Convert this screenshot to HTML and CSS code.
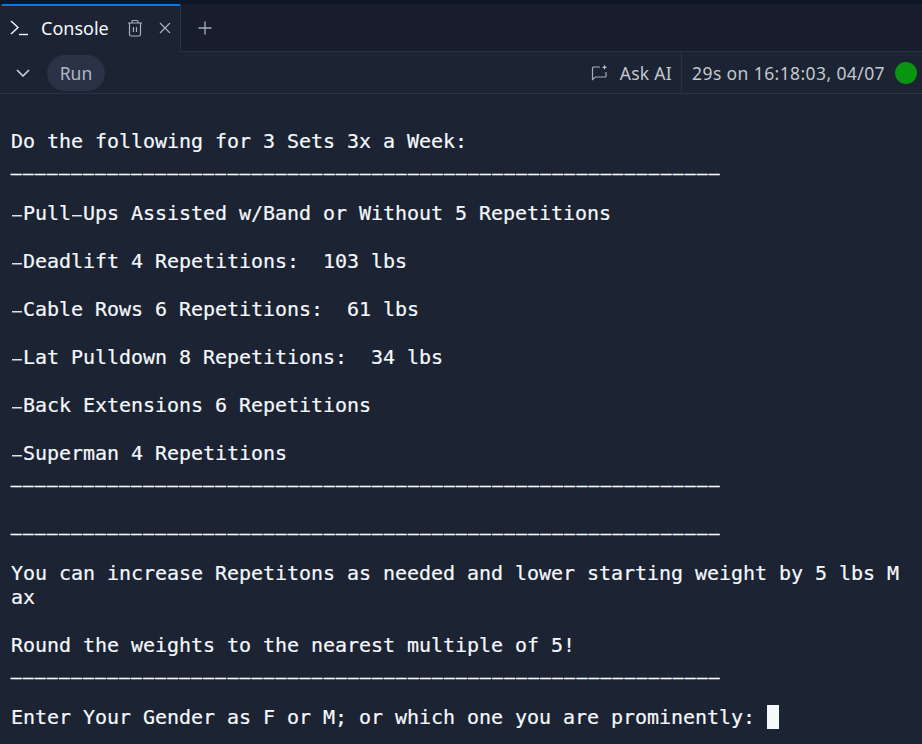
FILE: index.html
```html
<!DOCTYPE html>
<html lang="en">
<head>
<meta charset="utf-8">
<title>Console</title>
<link rel="stylesheet" href="styles.css">
</head>
<body>
<div class="app">
  <div class="tabbar">
    <div class="tab">
      <svg class="icon-term" width="22" height="18" viewBox="0 0 22 18" fill="none" stroke="#f5f9fc" stroke-width="1.4"><path d="M1 2l7 6.500L1 15"/><path d="M9 15.500h9"/></svg>
      <span class="tab-label">Console</span>
      <svg class="icon-trash" width="16" height="18" viewBox="0 0 16 18" fill="none" stroke="#a5afbd" stroke-width="1.2"><path d="M1 4h14M5 4V2.500a1 1 0 0 1 1-1h4a1 1 0 0 1 1 1V4M2.500 4v11.500a1.500 1.500 0 0 0 1.500 1.500h8a1.500 1.500 0 0 0 1.500-1.500V4M6.500 8v5M9.500 8v5"/></svg>
      <svg class="icon-close" width="12" height="12" viewBox="0 0 12 12" fill="none" stroke="#a5afbd" stroke-width="1.2"><path d="M1 1l10 10M11 1L1 11"/></svg>
    </div>
    <div class="tab-rest">
      <svg width="14" height="14" viewBox="0 0 14 14" fill="none" stroke="#a5afbd" stroke-width="1.3"><path d="M7 0.500v13M0.500 7h13"/></svg>
    </div>
  </div>
  <div class="toolbar">
    <svg class="icon-chev" width="14" height="8" viewBox="0 0 14 8" fill="none" stroke="#d5dbe3" stroke-width="1.5"><path d="M1 1l6 6 6-6"/></svg>
    <span class="run">Run</span>
    <div class="ask">
      <svg width="17" height="17" viewBox="0 0 17 17" fill="none" stroke="#a5afbd" stroke-width="1.2"><path d="M9 3H2.500A1 1 0 0 0 1.500 4v11.500L4.500 13H14a1 1 0 0 0 1-1V8"/><path d="M13.500 0.500l.7 2 2 .7-2 .7-.7 2-.7-2-2-.7 2-.7z" fill="#c2c8cc" stroke="none"/></svg>
      <span class="ask-label">Ask AI</span>
    </div>
    <div class="status">
      <span class="status-text">29s on 16:18:03, 04/07</span>
      <span class="dot"></span>
    </div>
  </div>
  <pre class="term">

Do the following for 3 Sets 3x a Week:
<span class="rule">___________________________________________________________</span>

<span class="hy">-</span>Pull<span class="hy">-</span>Ups Assisted w/Band or Without 5 Repetitions

<span class="hy">-</span>Deadlift 4 Repetitions:  103 lbs

<span class="hy">-</span>Cable Rows 6 Repetitions:  61 lbs

<span class="hy">-</span>Lat Pulldown 8 Repetitions:  34 lbs

<span class="hy">-</span>Back Extensions 6 Repetitions

<span class="hy">-</span>Superman 4 Repetitions
<span class="rule">___________________________________________________________</span>

<span class="rule">___________________________________________________________</span>

You can increase Repetitons as needed and lower starting weight by 5 lbs M
ax

Round the weights to the nearest multiple of 5!
<span class="rule">___________________________________________________________</span>

Enter Your Gender as F or M; or which one you are prominently: <span class="cursor"> </span></pre>
</div>
</body>
</html>
```
FILE: styles.css
```css
* { box-sizing: border-box; }
html, body { margin: 0; height: 100%; overflow: hidden; background: #1c2333; }
.app {
  display: flex;
  flex-direction: column;
  height: 744px;
  font-family: "Noto Sans", "Inter", sans-serif;
}
.tabbar {
  display: flex;
  height: 52px;
  flex: none;
  padding-top: 4px;
  background: #0e1525;
}
.tab {
  width: 181px;
  flex: none;
  display: flex;
  align-items: center;
  padding-left: 10px;
  padding-bottom: 1px;
  background: linear-gradient(#0079f2, #0079f2) 2px 0 / 178px 2px no-repeat, #1c2333;
  border-right: 1px solid #2b3245;
  color: #f5f9fc;
}
.icon-term { margin-right: 9px; }
.tab-label { font-size: 18px; width: 86px; }
.icon-trash { margin-right: 16px; }
.tab-rest {
  flex: 1;
  display: flex;
  align-items: center;
  padding-left: 17px;
  padding-top: 1px;
  background: #171d2d;
  border-bottom: 1px solid #2b3245;
}
.toolbar {
  display: flex;
  align-items: center;
  flex: none;
  height: 42px;
  border-bottom: 1px solid #2b3245;
  padding-left: 16px;
  color: #c2c8cc;
  font-size: 17.500px;
}
.icon-chev { margin-right: 17px; }
.run {
  display: flex;
  align-items: center;
  justify-content: center;
  width: 58px;
  height: 36px;
  border-radius: 18px;
  background: #2b3245;
  color: #b0b8c4;
}
.ask {
  margin-left: auto;
  display: flex;
  align-items: center;
  gap: 12px;
  height: 100%;
  padding-right: 9px;
  border-right: 1px solid #2b3245;
}
.ask-label { letter-spacing: 0.300px; }
.status {
  display: flex;
  align-items: center;
  gap: 10px;
  padding-left: 10px;
  padding-right: 5px;
}
.status-text { letter-spacing: 0.400px; }
.dot {
  width: 22px;
  height: 22px;
  border-radius: 50%;
  background: #0a9410;
}
.term {
  margin: 0;
  flex: 1;
  overflow: hidden;
  padding: 11px 0 0 11px;
  font-family: "DejaVu Sans Mono", monospace;
  font-size: 20px;
  line-height: 24px;
  letter-spacing: -0.04px;
  color: #f5f9fc;
  background: #1c2333;
  -webkit-text-stroke: 0.2px #f5f9fc;
}
.rule {
  font-size: 17px;
  line-height: 20px;
  letter-spacing: 1.800px;
  vertical-align: 1px;
  -webkit-text-stroke: 0.900px #f5f9fc;
}
.hy {
  display: inline-block;
  width: 12px;
  height: 24px;
  vertical-align: top;
  color: transparent;
  -webkit-text-stroke: 0;
  background: linear-gradient(#dfe5ec, #dfe5ec) 1px 13.500px / 10px 1.500px no-repeat;
}
.cursor {
  display: inline-block;
  width: 12px;
  height: 24px;
  vertical-align: top;
  background: #f5f9fc;
}
```
